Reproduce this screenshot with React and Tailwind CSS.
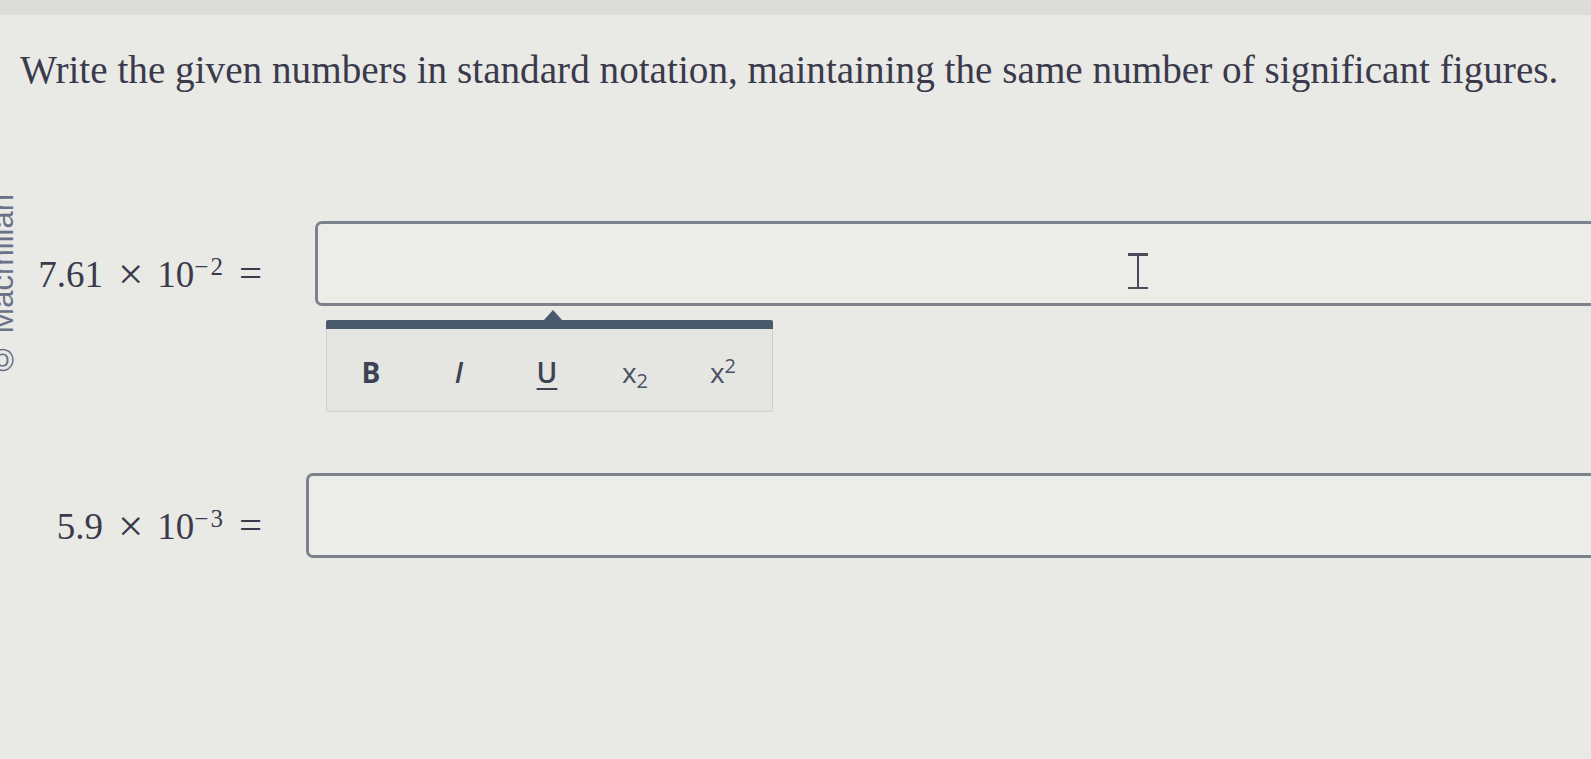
import React from 'react';

const serif = { fontFamily: '"Liberation Serif", "Times New Roman", serif' };

function Sci({ base, exp }) {
    return (
        <span className="whitespace-nowrap">
            {base}
            <span className="ml-[15px] mr-[14px] text-[45px] relative top-[2px]">×</span>
            10
            <sup className="text-[25px] tracking-[2px]">−{exp}</sup>
            <span className="ml-[14px] text-[41px]">=</span>
        </span>
    );
}

function Toolbar() {
    return (
        <div className="ml-[326px] mt-[14px] w-[447px] relative">
            <div className="absolute left-[218px] -top-[10px] w-0 h-0 border-l-[9px] border-r-[9px] border-b-[10px] border-l-transparent border-r-transparent border-b-[#4a596c]"></div>
            <div className="h-[9px] bg-[#4a596c] rounded-t-[2px]"></div>
            <div
                className="h-[83px] pt-[4px] bg-[#e5e6e2] border border-t-0 border-[#cdcfcb] rounded-b-[3px] flex items-center text-[#3c4254] text-[28px]"
                style={{ fontFamily: '"Open Sans", "Noto Sans", sans-serif' }}
            >
                <span className="w-[88px] text-center font-bold">B</span>
                <span className="w-[88px] text-center italic font-semibold">I</span>
                <span className="w-[88px] text-center font-semibold underline underline-offset-[5px] decoration-2">U</span>
                <span className="w-[88px] text-center text-[#4b5162]">x<sub className="text-[20px]">2</sub></span>
                <span className="w-[88px] text-center text-[#4b5162]">x<sup className="text-[20px]">2</sup></span>
            </div>
        </div>
    );
}

function AnswerBox({ children }) {
    return (
        <div className="flex-1 h-[85px] border-[3px] border-r-0 border-[#7c818c] rounded-l-[7px] bg-[#ecede8] relative">
            {children}
        </div>
    );
}

export default function App() {
    return (
        <div className="w-[1591px] h-[759px] bg-[#e9eae5] overflow-hidden relative">
            <div className="h-[15px] bg-[#dcddd9]"></div>

            {/* publisher credit running up the left edge, mostly cut off */}
            <span
                className="absolute left-[-13px] bottom-[382px] text-[31px] leading-[31px] text-[#6b7188] whitespace-nowrap [writing-mode:vertical-rl] rotate-180"
                style={{ fontFamily: '"Liberation Sans", Arial, sans-serif' }}
            >
                © Macmillan
            </span>

            <h1 className="pl-[20px] pt-[31px] text-[39.2px] leading-[48px] text-[#3a3a4c]" style={serif}>
                Write the given numbers in standard notation, maintaining the same number of significant figures.
            </h1>

            <div className="mt-[127px] flex items-start text-[37px] leading-[37px] text-[#3a3a4c]" style={serif}>
                <div className="w-[262px] pt-[33px] text-right shrink-0">
                    <Sci base="7.61" exp="2" />
                </div>
                <div className="ml-[53px] flex-1 flex">
                    <AnswerBox>
                        <span className="absolute left-[810px] top-[29px] w-[20px] h-[36px]">
                            <span className="absolute left-0 top-0 w-[20px] h-[2.5px] bg-[#4a4a5a]"></span>
                            <span className="absolute left-[8.75px] top-0 w-[2.5px] h-[36px] bg-[#4a4a5a]"></span>
                            <span className="absolute left-0 bottom-0 w-[20px] h-[2.5px] bg-[#4a4a5a]"></span>
                        </span>
                    </AnswerBox>
                </div>
            </div>

            <Toolbar />

            <div className="mt-[61px] flex items-start text-[37px] leading-[37px] text-[#3a3a4c]" style={serif}>
                <div className="w-[262px] pt-[33px] text-right shrink-0">
                    <Sci base="5.9" exp="3" />
                </div>
                <div className="ml-[44px] flex-1 flex">
                    <AnswerBox />
                </div>
            </div>
        </div>
    );
}
